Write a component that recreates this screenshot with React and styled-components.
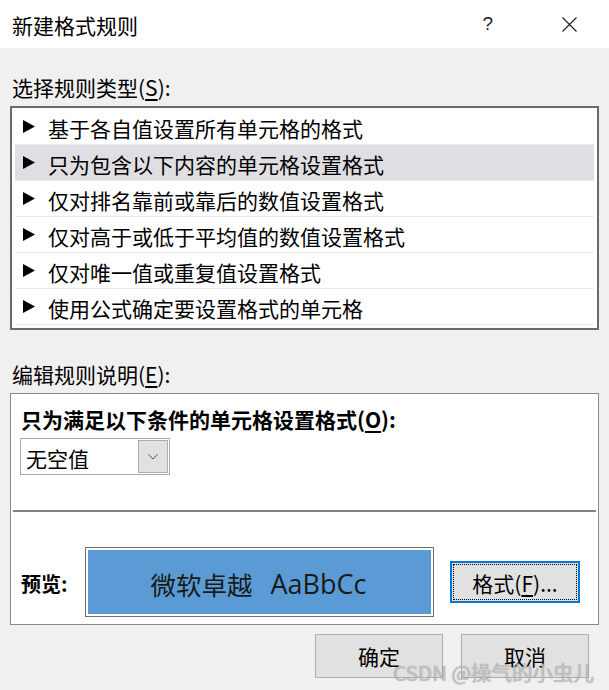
import React from "react";
import styled, { createGlobalStyle } from "styled-components";

const GlobalStyle = createGlobalStyle`
    html, body {
        margin: 0;
        padding: 0;
        background: #F0F0F0;
    }
    body {
        font-family: "Noto Sans CJK SC", "Noto Sans", sans-serif;
        color: #000000;
    }
`

function Triangle() {
    return (
        <svg width="12" height="13" viewBox="0 0 12 13">
            <polygon points="0,0 12,6.5 0,13" fill="#000000" />
        </svg>
    )
}

function Chevron() {
    return (
        <svg width="10" height="6" viewBox="0 0 10 6">
            <polyline points="0.5,0.5 5,5 9.5,0.5" fill="none" stroke="#505050" strokeWidth="1" />
        </svg>
    )
}

function CloseIcon() {
    return (
        <svg width="15" height="15" viewBox="0 0 15 15">
            <path d="M0.5 0.5 L14.5 14.5 M14.5 0.5 L0.5 14.5" stroke="#1a1a1a" strokeWidth="1.1" fill="none" />
        </svg>
    )
}

function App() {
    const rules = [
        { id: 1, text: "基于各自值设置所有单元格的格式" },
        { id: 2, text: "只为包含以下内容的单元格设置格式", selected: true },
        { id: 3, text: "仅对排名靠前或靠后的数值设置格式" },
        { id: 4, text: "仅对高于或低于平均值的数值设置格式" },
        { id: 5, text: "仅对唯一值或重复值设置格式" },
        { id: 6, text: "使用公式确定要设置格式的单元格" },
    ]
    return (
        <Dialog>
            <GlobalStyle />
            <TitleBar>
                <Title>新建格式规则</Title>
                <TitleButtons>
                    <Help>?</Help>
                    <CloseIcon />
                </TitleButtons>
            </TitleBar>
            <Body>
                <Label>选择规则类型(<u>S</u>):</Label>
                <ListBox>
                    {rules.map((item) => (
                        <Row key={item.id} $selected={item.selected}>
                            <Triangle />
                            <RowText>{item.text}</RowText>
                        </Row>
                    ))}
                </ListBox>
                <Label $top={30}>编辑规则说明(<u>E</u>):</Label>
                <RuleBox>
                    <Heading>只为满足以下条件的单元格设置格式(<u>O</u>):</Heading>
                    <Select>
                        <SelectText>无空值</SelectText>
                        <SelectButton><Chevron /></SelectButton>
                    </Select>
                    <Divider />
                    <PreviewRow>
                        <PreviewLabel>预览:</PreviewLabel>
                        <PreviewFrame>
                            <PreviewFill>
                                <span>微软卓越</span>
                                <Latin>AaBbCc</Latin>
                            </PreviewFill>
                        </PreviewFrame>
                        <FormatButton>
                            <Focus>格式(<u>F</u>)...</Focus>
                        </FormatButton>
                    </PreviewRow>
                </RuleBox>
                <Footer>
                    <Button>确定</Button>
                    <Button>取消</Button>
                </Footer>
            </Body>
            <Watermark>CSDN @操气的小虫儿</Watermark>
        </Dialog>
    )
}

export default App

const Dialog = styled.div`
    position: relative;
    width: 609px;
    height: 690px;
    background: #F0F0F0;
    overflow: hidden;
`

const TitleBar = styled.div`
    height: 48px;
    background: #FFFFFF;
    display: flex;
    align-items: center;
    justify-content: space-between;
    padding: 0 32px 0 12px;
`

const Title = styled.div`
    font-size: 21px;
    line-height: 24px;
    margin-top: 2px;
`

const TitleButtons = styled.div`
    display: flex;
    align-items: center;
    gap: 69px;
`

const Help = styled.div`
    font-family: "Liberation Sans", sans-serif;
    font-size: 19px;
    color: #1a1a1a;
    line-height: 24px;
`

const Body = styled.div`
    padding: 25px 10px 0 10px;
    display: flex;
    flex-direction: column;
`

const Label = styled.div`
    margin-top: ${(p) => (p.$top ? p.$top : 0)}px;
    margin-bottom: 9px;
    padding-left: 2px;
    padding-top: 2px;
    height: 22px;
    font-size: 21px;
    line-height: 24px;

    u {
        text-underline-offset: 3px;
    }
`

const ListBox = styled.div`
    height: 224px;
    box-sizing: border-box;
    border: 2px solid #6A6A6A;
    background: #FFFFFF;
    padding: 1px 3px 1px 3px;
`

const Row = styled.div`
    height: 36px;
    box-sizing: border-box;
    display: flex;
    align-items: center;
    gap: 13px;
    padding-left: 8px;
    background: ${(p) => (p.$selected ? "#DFDFE3" : "#FFFFFF")};
    border-bottom: 1px solid #EDEDED;
    font-size: 21px;
    white-space: nowrap;
`

const RowText = styled.span`
    padding-top: 3px;
`

const RuleBox = styled.div`
    height: 232px;
    box-sizing: border-box;
    border: 1px solid #868A91;
    background: #FFFFFF;
    padding: 13px 2px 0 2px;
    display: flex;
    flex-direction: column;
`

const Heading = styled.div`
    padding-left: 8px;
    height: 24px;
    font-size: 21px;
    font-weight: 700;
    line-height: 24px;

    u {
        text-underline-offset: 3px;
    }
`

const Select = styled.div`
    margin: 7px 0 0 7px;
    width: 150px;
    height: 37px;
    box-sizing: border-box;
    border: 1px solid #A9A9A9;
    padding: 1px;
    display: flex;
    align-items: stretch;
    justify-content: space-between;
`

const SelectText = styled.div`
    padding: 2px 0 0 4px;
    font-size: 21px;
    display: flex;
    align-items: center;
`

const SelectButton = styled.div`
    width: 30px;
    box-sizing: border-box;
    border: 1px solid #ADADAD;
    background: #E1E1E1;
    display: flex;
    align-items: center;
    justify-content: center;
`

const Divider = styled.div`
    margin-top: 35px;
    height: 2px;
    background: #828282;
`

const PreviewRow = styled.div`
    margin-top: 35px;
    display: flex;
    align-items: center;
    padding-left: 8px;
`

const PreviewLabel = styled.div`
    width: 64px;
    padding-top: 2px;
    font-size: 20px;
    font-weight: 700;
`

const PreviewFrame = styled.div`
    width: 349px;
    height: 70px;
    box-sizing: border-box;
    border: 1px solid #6E6E6E;
    padding: 2px;
`

const PreviewFill = styled.div`
    height: 100%;
    background: #5B9BD5;
    display: flex;
    align-items: center;
    justify-content: center;
    font-size: 25.5px;
    color: #1A1A1A;
    padding: 3px 2px 0 0;
    box-sizing: border-box;
`

const Latin = styled.span`
    margin-left: 18px;
    font-family: "Open Sans", "Noto Sans", sans-serif;
    font-weight: 400;
    font-size: 27px;
`

const FormatButton = styled.div`
    margin-left: 16px;
    width: 130px;
    height: 42px;
    box-sizing: border-box;
    border: 2px solid #0078D7;
    background: #E1E1E1;
    padding: 1px;
`

const Focus = styled.div`
    height: 100%;
    box-sizing: border-box;
    border: 1px dotted #000000;
    display: flex;
    align-items: center;
    justify-content: center;
    padding-top: 2px;
    font-size: 21px;

    u {
        text-underline-offset: 3px;
    }
`

const Footer = styled.div`
    margin-top: 9px;
    display: flex;
    justify-content: flex-end;
    gap: 18px;
    padding-right: 10px;
`

const Button = styled.div`
    width: 128px;
    height: 44px;
    box-sizing: border-box;
    border: 1px solid #ADADAD;
    background: #E1E1E1;
    display: flex;
    align-items: center;
    justify-content: center;
    font-size: 21px;
`

const Watermark = styled.div`
    position: absolute;
    right: 15px;
    bottom: 6px;
    font-size: 20.5px;
    line-height: 24px;
    color: rgba(205, 205, 205, 0.85);
    text-shadow: 0 0 1px rgba(90, 90, 90, 0.7);
    white-space: nowrap;
`
